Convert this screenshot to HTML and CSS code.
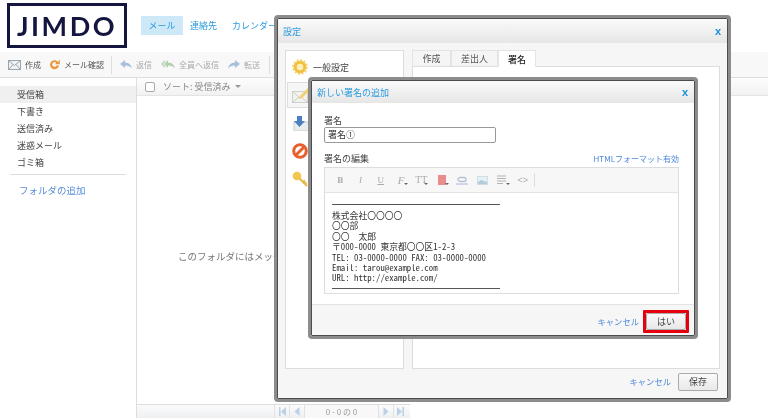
FILE: index.html
```html
<!DOCTYPE html>
<html lang="ja">
<head>
<meta charset="utf-8">
<title>JIMDO メール</title>
<link rel="stylesheet" href="styles.css">
</head>
<body>
<div class="app">
  <header class="top">
    <div class="logo">JIMDO</div>
    <nav class="nav">
      <a class="nav-item active">メール</a>
      <a class="nav-item">連絡先</a>
      <a class="nav-item">カレンダー</a>
    </nav>
  </header>
  <div class="toolbar">
    <span class="tool"><svg width="13" height="10" viewBox="0 0 13 10"><rect x=".5" y=".5" width="12" height="9" fill="#eef2f4" stroke="#9aa5aa"/><path d="M1 1l5.500 4.500L12 1M1 9l4-4.500M12 9L8 4.500" fill="none" stroke="#9aa5aa"/></svg>作成</span>
    <span class="tool gap-a"><svg width="11" height="11" viewBox="0 0 11 11"><path d="M9.500 3.500A4.500 4.500 0 1 0 10 6.500H7.500A2.200 2.200 0 1 1 7.200 4L6 5.200h4.800V.6L9.500 2z" fill="#e8973a"/></svg>メール確認</span>
    <i class="sep"></i>
    <span class="tool dim"><svg width="12" height="9" viewBox="0 0 12 9"><path d="M5 0L0 4l5 4V5.500c3 0 5 .8 7 3C11.500 5 9 2.800 5 2.500z" fill="#a9c0dc"/></svg>返信</span>
    <span class="tool dim gap-b"><svg width="14" height="9" viewBox="0 0 14 9"><path d="M4 0L0 4l4 4V6.500L2 4l2-2.500zM7 0L3 4l4 4V5.500c3 0 5 .8 7 3C13.500 5 11 2.800 7 2.500z" fill="#b4d0b0"/></svg>全員へ返信</span>
    <span class="tool dim gap-b"><svg width="12" height="9" viewBox="0 0 12 9"><path d="M7 0l5 4-5 4V5.500c-3 0-5 .8-7 3C.5 5 3 2.800 7 2.500z" fill="#a9c0dc"/></svg>転送</span>
    <i class="sep sep-b"></i>
    <svg class="del" width="8" height="9" viewBox="0 0 8 9"><path d="M1 1l6 7M7 1L1 8" stroke="#d78a8a" stroke-width="2.400"/></svg>
  </div>
  <div class="main">
    <aside class="side">
      <ul class="folders">
        <li class="folder current">受信箱</li>
        <li class="folder">下書き</li>
        <li class="folder">送信済み</li>
        <li class="folder">迷惑メール</li>
        <li class="folder">ゴミ箱</li>
      </ul>
      <hr class="side-line">
      <a class="add-folder">フォルダの追加</a>
    </aside>
    <section class="list">
      <div class="list-head"><span class="check"></span><span class="sort">ソート: 受信済み</span><i class="caret"></i></div>
      <div class="list-body"><p class="empty">このフォルダにはメッセージがありません</p></div>
      <div class="pager">
        <span class="pg"><svg width="8" height="9" viewBox="0 0 8 9"><path d="M1 0h1.500v9H1zM8 0v9L3 4.500z" fill="#bcd0e6"/></svg></span>
        <span class="pg"><svg width="6" height="9" viewBox="0 0 6 9"><path d="M5.500 0v9L.5 4.500z" fill="#bcd0e6"/></svg></span>
        <span class="pg-text">0 - 0 の 0</span>
        <span class="pg"><svg width="6" height="9" viewBox="0 0 6 9"><path d="M.5 0v9l5-4.500z" fill="#bcd0e6"/></svg></span>
        <span class="pg"><svg width="8" height="9" viewBox="0 0 8 9"><path d="M7 0H5.500v9H7zM0 0v9l5-4.500z" fill="#bcd0e6"/></svg></span>
      </div>
    </section>
  </div>
</div>

<div class="dialog settings">
  <div class="dlg-head"><span class="dlg-title">設定</span><span class="dlg-x">x</span></div>
  <div class="settings-body">
    <div class="settings-cols">
      <div class="cat-panel">
        <div class="cat"><svg width="16" height="16" viewBox="0 0 16 16"><circle cx="8" cy="8" r="4.800" fill="#fbeebb" stroke="#f0c040" stroke-width="3"/><circle cx="8" cy="8" r="7" fill="none" stroke="#f3cf62" stroke-width="1.600" stroke-dasharray="2 1.660"/></svg><span class="cat-text">一般設定</span></div>
        <div class="cat selected"><svg width="18" height="15" viewBox="0 0 18 15"><rect x=".5" y="3.500" width="15" height="11" fill="#f2f2ef" stroke="#cfcfc8"/><path d="M1 14l6-5M15 14L9 9M1 4l7 6" fill="none" stroke="#cfcfc8"/><path d="M7 11l1-3 8-8 2 2-8 8z" fill="#efcf70"/></svg></div>
        <div class="cat"><svg width="18" height="15" viewBox="0 0 18 15"><rect x="2" y="6" width="15" height="9" fill="#e8ecee" stroke="#c8cdd0"/><path d="M5 0h5v5h3L7.500 11 2 5h3z" fill="#4a7fc0"/></svg></div>
        <div class="cat"><svg width="16" height="16" viewBox="0 0 16 16"><circle cx="8" cy="8" r="6.300" fill="#fff" stroke="#e8602c" stroke-width="3"/><path d="M3.500 12.500l9-9" stroke="#e8602c" stroke-width="3"/></svg></div>
        <div class="cat"><svg width="16" height="16" viewBox="0 0 16 16"><circle cx="5" cy="5" r="4.300" fill="#f1c750"/><path d="M7.500 7.500L15 15M11 11l2-1.500M13 13l1.500-1.500" stroke="#e6bb4c" stroke-width="2.200" fill="none"/></svg></div>
      </div>
      <div class="tab-area">
        <div class="tabs">
          <span class="tab t1">作成</span>
          <span class="tab t2">差出人</span>
          <span class="tab t3 on">署名</span>
        </div>
        <div class="tab-panel"><span class="peek"></span></div>
      </div>
    </div>
    <div class="dlg-foot settings-foot">
      <a class="link">キャンセル</a>
      <button class="btn save">保存</button>
    </div>
  </div>
</div>

<div class="dialog sign">
  <div class="dlg-head small"><span class="dlg-title">新しい署名の追加</span><span class="dlg-x">x</span></div>
  <div class="sign-body">
    <label class="lbl">署名</label>
    <div class="input">署名①</div>
    <div class="edit-row"><span class="lbl">署名の編集</span><a class="link html">HTMLフォーマット有効</a></div>
    <div class="editor">
      <div class="ed-tools">
        <span class="ed b">B</span>
        <span class="ed i">I</span>
        <span class="ed u">U</span>
        <span class="ed f">F<i class="mini"></i></span>
        <span class="ed t">TT<i class="mini"></i></span>
        <span class="ed"><span class="swatch"></span><i class="mini"></i></span>
        <span class="ed"><svg width="12" height="9" viewBox="0 0 12 9"><path d="M4 1.500h4a2 2 0 0 1 0 4H4a2 2 0 0 1 0-4z" fill="none" stroke="#b6c0d0" stroke-width="1.300"/><path d="M0 8h12" stroke="#a8b6e0"/></svg></span>
        <span class="ed"><svg width="11" height="9" viewBox="0 0 11 9"><rect x=".5" y=".5" width="10" height="8" fill="#e6f0f7" stroke="#cfdde6"/><path d="M1 6l3-2 6 2v2H1z" fill="#b4cbd8"/></svg></span>
        <span class="ed"><svg width="11" height="11" viewBox="0 0 11 11"><path d="M0 1h9M0 3.500h9M0 6h9M0 8.500h6" stroke="#b4b4b4" stroke-width="1.200"/></svg><i class="mini"></i></span>
        <span class="ed code">&lt;&gt;</span>
        <i class="ed-sep"></i>
      </div>
      <div class="ed-body">
        <hr class="sig-line">
        <p class="sig">株式会社〇〇〇〇</p>
        <p class="sig">〇〇部</p>
        <p class="sig">〇〇　太郎</p>
        <p class="sig">〒000-0000 東京都〇〇区1-2-3</p>
        <p class="sig">TEL: 03-0000-0000 FAX: 03-0000-0000</p>
        <p class="sig">Email: tarou@example.com</p>
        <p class="sig">URL: http://example.com/</p>
        <hr class="sig-line end">
      </div>
    </div>
  </div>
  <div class="dlg-foot sign-foot">
    <a class="link">キャンセル</a>
    <span class="hl"><button class="btn yes">はい</button></span>
  </div>
</div>
</body>
</html>
```
FILE: styles.css
```css
* { box-sizing: border-box; }
html { filter: blur(.3px); }
html, body { margin: 0; padding: 0; }
body {
  width: 768px; height: 418px; overflow: hidden; position: relative;
  background: #fff; color: #444;
  font-family: "Noto Sans CJK JP", "Liberation Sans", sans-serif;
  font-size: 9px; line-height: 1;
}
.app { width: 768px; height: 418px; display: flex; flex-direction: column; }
.top { height: 52px; display: flex; padding: 3px 0 0 7px; flex: none; }
.logo {
  width: 120px; height: 45px; border: 3px solid #14163f; color: #14163f;
  font-family: "Lato", "Liberation Sans", sans-serif; font-weight: 700;
  font-size: 27px; letter-spacing: 2.500px; display: flex; align-items: center; justify-content: center;
}
.nav { display: flex; margin: 13px 0 0 14px; height: 19px; }
.nav-item { color: #2b9be0; line-height: 19px; font-size: 9px; white-space: nowrap; }
.nav-item.active { background: #cde9f8; width: 42px; text-align: center; }
.nav-item:nth-child(2) { padding: 0 15px 0 7px; }
.toolbar {
  height: 26px; flex: none; display: flex; align-items: center; padding-left: 8px;
  background: #f8f8f8; border-bottom: 1px solid #ddd;
}
.tool { display: flex; align-items: center; gap: 4px; color: #555; font-size: 8px; white-space: nowrap; }
.tool.dim { color: #aaa; }
.gap-a { margin-left: 8px; }
.gap-b { margin-left: 9px; }
.sep { width: 1px; height: 18px; background: #ddd; margin: 0 8px 0 7px; }
.sep-b { margin: 0 5px 0 9px; }
.main { flex: 1; display: flex; min-height: 0; }
.side { width: 137px; flex: none; border-right: 1px solid #ddd; padding-top: 8px; }
.folders { list-style: none; margin: 0; padding: 0; }
.folder { height: 17px; line-height: 17px; padding-left: 17px; color: #444; }
.folder.current { background: #f0f0f0; }
.side-line { border: 0; border-top: 1px solid #ddd; margin: 3px 10px 0; }
.add-folder { display: block; margin: 11px 0 0 19px; font-size: 9.500px; color: #5a8fd8; }
.list { flex: 1; display: flex; flex-direction: column; min-width: 0; }
.list-head {
  height: 18px; flex: none; display: flex; align-items: center; padding-left: 8px;
  background: linear-gradient(#fdfdfd, #f2f2f2); border-bottom: 1px solid #e4e4e4;
}
.check { width: 10px; height: 10px; border: 1px solid #aaa; border-radius: 2px; background: #fff; margin-right: 8px; }
.sort { color: #888; }
.caret { width: 0; height: 0; border: 3px solid transparent; border-top-color: #999; margin: 3px 0 0 4px; }
.list-body { flex: 1; padding-top: 156px; min-height: 0; }
.empty { margin: 0 0 0 41px; font-size: 9.500px; color: #777; white-space: nowrap; }
.pager {
  height: 14px; flex: none; width: 273px; border-top: 1px solid #ddd; display: flex; padding-left: 137px;
  background: linear-gradient(#fbfbfb, #eef0f2);
}
.pg { width: 15px; display: flex; align-items: center; justify-content: center; border-left: 1px solid #e2e2e2; }
.pg-text { width: 74px; text-align: center; line-height: 13px; color: #999; font-size: 8px; border-left: 1px solid #e2e2e2; background: #f8f8f8; }

.dialog { position: absolute; background: #f6f6f6; border: 1px solid #4c4c4c; outline: 3px solid #8c8c8c; border-radius: 1px; display: flex; flex-direction: column; }
.settings { left: 277px; top: 18px; width: 451px; height: 381px; }
.sign { left: 311px; top: 80px; width: 384px; height: 256px; }
.dlg-head {
  height: 24px; flex: none; display: flex; align-items: center; justify-content: space-between;
  padding: 0 6px 0 5px; background: linear-gradient(#fafafa, #e6e6e6);
}
.dlg-head.small { height: 22px; }
.dlg-title { color: #2b9be0; font-size: 9px; }
.dlg-x { color: #1a8fdc; font: bold 11px/1 "Liberation Sans", sans-serif; }
.settings-body { flex: 1; display: flex; flex-direction: column; padding: 7px 7px 0; min-height: 0; }
.settings-cols { display: flex; gap: 8px; height: 319px; flex: none; }
.cat-panel { width: 119px; flex: none; background: #fff; border: 1px solid #ddd; padding: 2px 1px; }
.cat { height: 28px; display: flex; align-items: center; padding-left: 5px; }
.cat-text { margin-left: 5px; color: #444; }
.cat.selected { background: #f6f6f6; border: 1px solid #ddd; height: 26px; padding-left: 4px; margin: 1px 0; }
.tab-area { flex: 1; display: flex; flex-direction: column; min-width: 0; }
.tabs { display: flex; height: 16px; flex: none; }
.tab { display: flex; align-items: center; justify-content: center; background: #f5f5f5; color: #555; border: 1px solid #e4e4e4; border-bottom: 0; font-size: 9px; }
.t1 { width: 39px; } .t2 { width: 47px; }
.t3 { width: 38px; }
.tab.on { background: #fff; color: #222; font-weight: 500; margin-bottom: -1px; position: relative; z-index: 1; height: 17px; }
.tab-panel { flex: 1; background: #fff; border: 1px solid #ddd; padding: 13px 0 0 7px; }
.peek { display: block; width: 82px; height: 4px; background: #777; border-radius: 2px 2px 0 0; }
.dlg-foot { display: flex; align-items: center; justify-content: flex-end; flex: 1; }
.settings-foot { gap: 7px; padding: 0 2px 4px 0; }
.link { color: #4a86d8; font-size: 8.300px; white-space: nowrap; }
.link.html { font-size: 8px; }
.btn { font: 9px/1 "Noto Sans CJK JP", sans-serif; color: #444; border: 1px solid #aaa; border-radius: 2px; background: linear-gradient(#fafafa, #e8e8e8); padding: 0; }
.save { width: 40px; height: 18px; }
.sign-body { height: 202px; flex: none; background: #fff; padding: 13px 15px 0 12px; border-bottom: 1px solid #e2e2e2; }
.lbl { display: block; color: #444; font-size: 9px; height: 10px; line-height: 10px; }
.input { width: 172px; height: 16px; margin-top: 1px; border: 1px solid #999; border-radius: 2px; padding-left: 3px; line-height: 14px; font-size: 9px; color: #333; }
.edit-row { display: flex; justify-content: space-between; align-items: center; width: 355px; margin-top: 11px; height: 10px; }
.editor { margin-top: 3px; width: 355px; height: 127px; border: 1px solid #ddd; display: flex; flex-direction: column; }
.ed-tools { height: 25px; flex: none; display: flex; align-items: center; background: #f7f7f7; border-bottom: 1px solid #e4e4e4; padding-left: 5px; }
.ed { position: relative; width: 20.300px; height: 12px; display: flex; align-items: center; justify-content: center; color: #aaa; font: bold 9px/1 "Liberation Serif", serif; }
.ed.i { font-style: italic; font-weight: normal; }
.ed.u { text-decoration: underline; font-weight: normal; }
.ed.f { font-style: italic; font-weight: normal; font-size: 11px; }
.ed.t { font-weight: normal; font-size: 10px; }
.ed.code { font: 9px/1 "Liberation Sans", sans-serif; color: #aaa; }
.swatch { width: 8px; height: 10px; background: #e88c8c; }
.mini { position: absolute; right: 3px; bottom: -1px; width: 0; height: 0; border: 2px solid transparent; border-top-color: #666; }
.ed-sep { width: 1px; height: 14px; background: #ddd; margin-left: 1px; }
.ed-body { flex: 1; background: #fff; padding: 11px 0 0 7px; }
.sig-line { width: 168px; margin: 0 0 6px; border: 0; border-top: 1px solid #555; }
.sig-line.end { margin: 4px 0 0; border-top-width: 1.500px; }
.sig { margin: 0; font-family: "Noto Sans Mono CJK JP", "Noto Sans CJK JP", monospace; font-size: 8.800px; line-height: 10.400px; height: 10.400px; color: #333; white-space: pre; }
.sign-foot { gap: 4px; padding: 2px 5px 0 0; }
.hl { display: block; border: 3px solid #e6000f; border-radius: 1px; }
.yes { display: block; width: 40px; height: 17px; }
```
